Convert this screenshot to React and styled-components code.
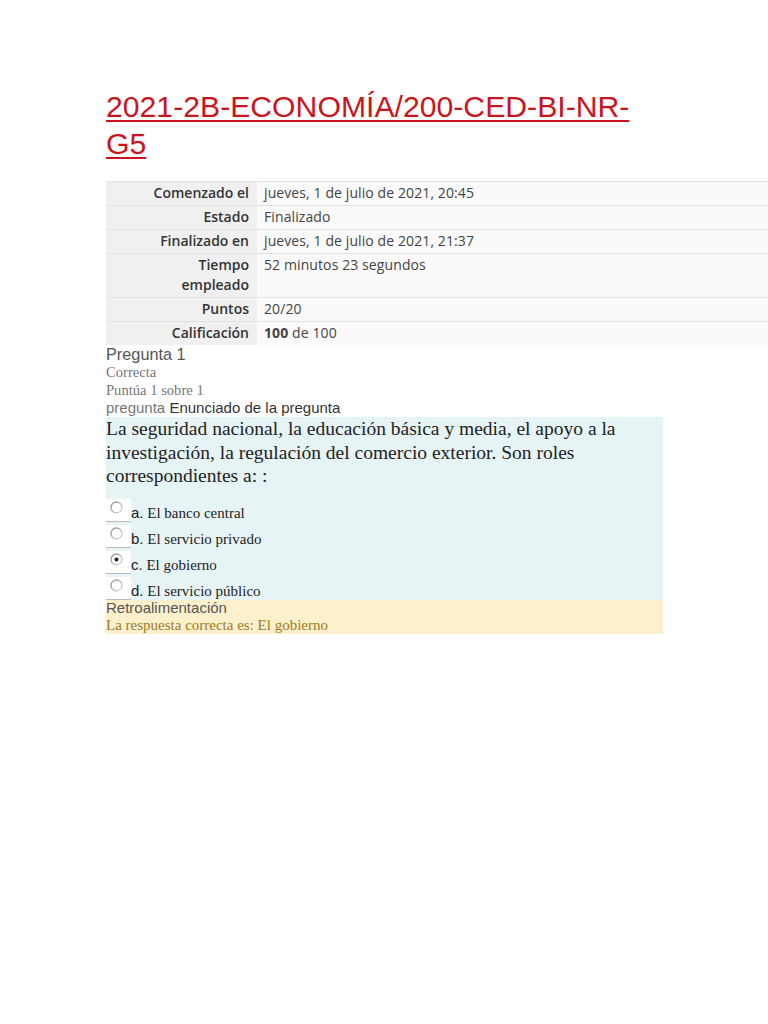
import React from 'react'
import styled, { createGlobalStyle } from 'styled-components'

const Global = createGlobalStyle`
  html, body { margin: 0; padding: 0; background: #fff; }
  body { overflow-x: hidden; }
`

const Page = styled.main`
  padding: 88px 0 0 106px;
  font-family: "Liberation Sans", Arial, sans-serif;
`

const Title = styled.h1`
  margin: 0 0 19px;
  width: 540px;
  font-weight: normal;
  font-size: 30.2px;
  line-height: 37px;
  color: #c9151e;
  text-decoration: underline;
  text-underline-offset: 3px;
  text-decoration-thickness: 2px;
`

const Summary = styled.table`
  width: calc(100vw - 106px);
  border-collapse: collapse;
  font-family: "Open Sans", "Noto Sans", sans-serif;
  font-size: 14px;
  line-height: 20px;
  color: #444;
`

const Row = styled.tr`
  border-top: 1px solid #e2e2e2;
`

const Label = styled.th`
  width: 143px;
  padding: 1px 8px 2px 0;
  background: #f0f0f0;
  text-align: right;
  font-weight: 600;
  color: #333;
  vertical-align: top;
`

const Value = styled.td`
  padding: 1px 0 2px 7px;
  background: #fafafa;
  vertical-align: top;
  letter-spacing: 0.1px;
`

const Question = styled.section`
  width: 557px;
`

const QNumber = styled.div`
  font-size: 16.3px;
  line-height: 18px;
  color: #555;
`

const Meta = styled.div`
  font-family: "Liberation Serif", "Times New Roman", serif;
  font-size: 14.6px;
  line-height: 18px;
  color: #777;
`

const Heading = styled.div`
  font-size: 15px;
  line-height: 18px;
  color: #333;
  span { color: #777; }
`

const Content = styled.div`
  background: #e7f4f6;
`

const Prompt = styled.p`
  margin: 0;
  font-family: "Liberation Serif", "Times New Roman", serif;
  font-size: 19.5px;
  line-height: 23.5px;
  color: #222;
`

const Options = styled.div`
  padding-top: 8px;
  display: flex;
  flex-direction: column;
`

const Option = styled.label`
  display: flex;
  align-items: flex-end;
  height: 26px;
`

const RadioBox = styled.span`
  width: 25px;
  height: 23px;
  background: #fff;
  border-bottom: 1px solid #bbb;
  display: flex;
  padding: 2px 0 0 4px;
  box-sizing: border-box;
`

const OptionText = styled.span`
  font-family: "Liberation Serif", "Times New Roman", serif;
  font-size: 15px;
  line-height: 18px;
  color: #222;
  b {
    font-weight: normal;
    font-family: "Liberation Sans", Arial, sans-serif;
  }
`

const Feedback = styled.div`
  background: #fdf0cd;
`

const FeedbackTitle = styled.div`
  font-size: 15px;
  line-height: 16px;
  color: #555;
`

const Answer = styled.div`
  font-family: "Liberation Serif", "Times New Roman", serif;
  font-size: 15px;
  line-height: 18px;
  color: #a07a22;
`

const Radio = ({ checked }) => (
  <svg width="13" height="13" viewBox="0 0 13 13">
    <defs>
      <linearGradient id="rg" x1="0" y1="0" x2="1" y2="1">
        <stop offset="0" stopColor="#888" />
        <stop offset="1" stopColor="#ddd" />
      </linearGradient>
    </defs>
    <circle cx="6.5" cy="6.5" r="5.5" fill="#fff" stroke="url(#rg)" strokeWidth="1.3" />
    {checked && <circle cx="6.5" cy="6.5" r="2" fill="#222" />}
  </svg>
)

const rows = [
  ['Comenzado el', 'jueves, 1 de julio de 2021, 20:45'],
  ['Estado', 'Finalizado'],
  ['Finalizado en', 'jueves, 1 de julio de 2021, 21:37'],
  [<>Tiempo<br />empleado</>, '52 minutos 23 segundos'],
  ['Puntos', '20/20'],
  ['Calificación', <><b>100</b> de 100</>],
]

const options = [
  ['a.', 'El banco central'],
  ['b.', 'El servicio privado'],
  ['c.', 'El gobierno', true],
  ['d.', 'El servicio público'],
]

export default function App () {
  return (
    <Page>
      <Global />
      <Title>2021-2B-ECONOMÍA/200-CED-BI-NR-G5</Title>
      <Summary>
        <tbody>
          {rows.map((r, i) =>
            <Row key={i}>
              <Label>{r[0]}</Label>
              <Value>{r[1]}</Value>
            </Row>
          )}
        </tbody>
      </Summary>
      <Question>
        <QNumber>Pregunta 1</QNumber>
        <Meta>Correcta</Meta>
        <Meta>Puntúa 1 sobre 1</Meta>
        <Heading><span>pregunta</span> Enunciado de la pregunta</Heading>
        <Content>
          <Prompt>La seguridad nacional, la educación básica y media, el apoyo a la investigación, la regulación del comercio exterior. Son roles correspondientes a: :</Prompt>
          <Options>
            {options.map(o =>
              <Option key={o[0]}>
                <RadioBox><Radio checked={o[2]} /></RadioBox>
                <OptionText><b>{o[0]}</b> {o[1]}</OptionText>
              </Option>
            )}
          </Options>
        </Content>
        <Feedback>
          <FeedbackTitle>Retroalimentación</FeedbackTitle>
          <Answer>La respuesta correcta es: El gobierno</Answer>
        </Feedback>
      </Question>
    </Page>
  )
}
